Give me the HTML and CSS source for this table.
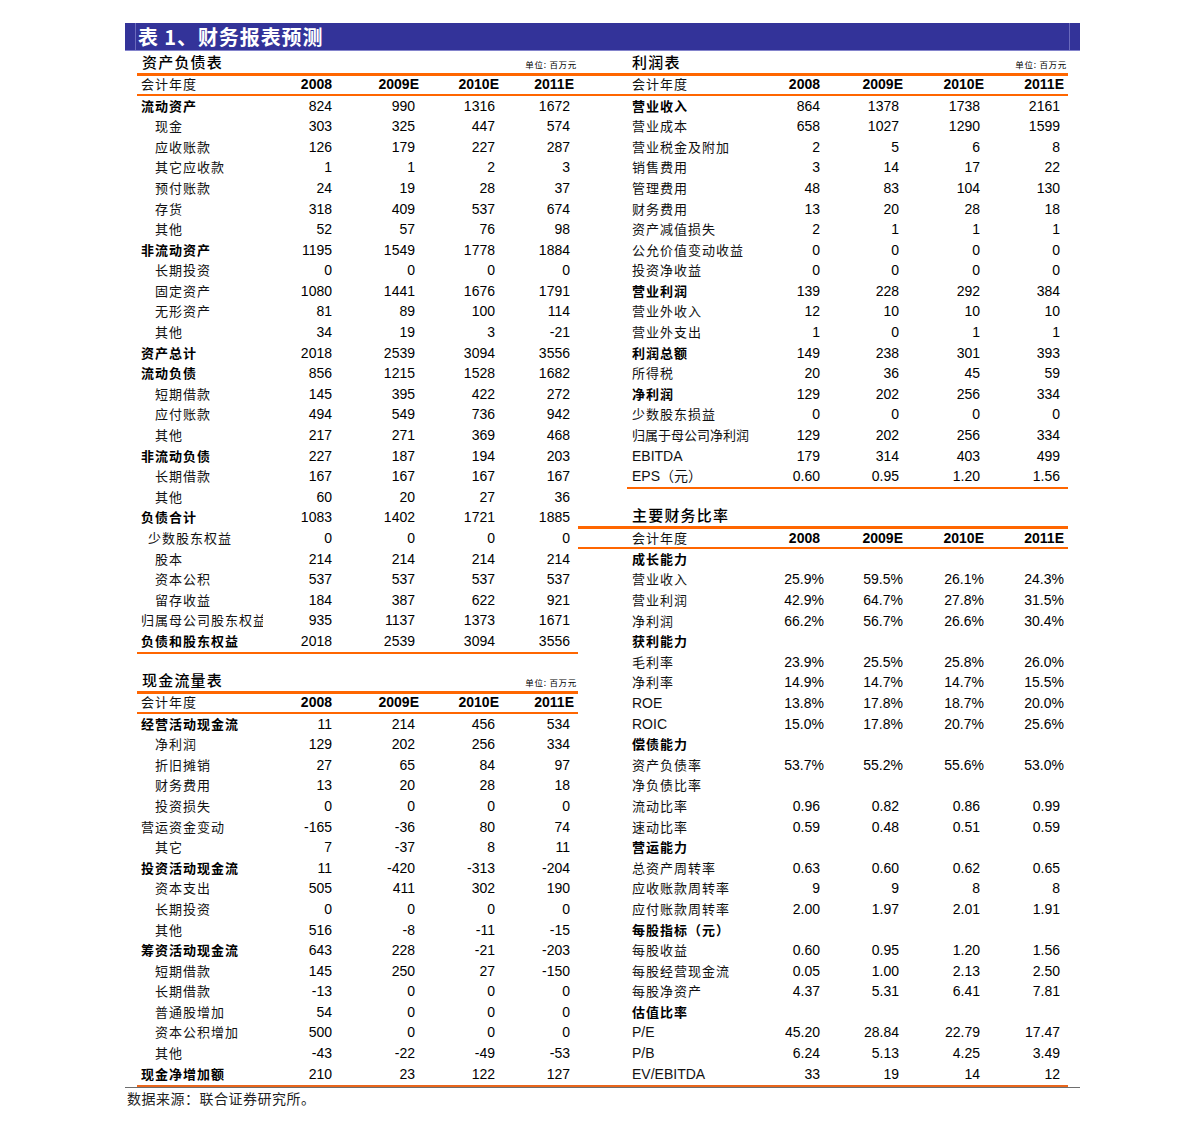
FILE: index.html
```html
<!DOCTYPE html>
<html lang="zh-CN">
<head>
<meta charset="utf-8">
<title>表 1、财务报表预测</title>
<link rel="stylesheet" href="styles.css">
</head>
<body>
<div class="page">
  <div class="titlebar"><div class="tb-in">表 1、财务报表预测</div></div>
  <div class="body">
    <div class="col left">
      <div class="sec"><span class="st">资产负债表</span><span class="unit">单位: 百万元</span></div>
      <div class="r hd"><span class="l">会计年度</span><span class="y0">2008</span><span>2009E</span><span>2010E</span><span>2011E</span></div>
      <div class="r b"><span class="l">流动资产</span><span>824</span><span>990</span><span>1316</span><span>1672</span></div>
      <div class="r"><span class="l i">现金</span><span>303</span><span>325</span><span>447</span><span>574</span></div>
      <div class="r"><span class="l i">应收账款</span><span>126</span><span>179</span><span>227</span><span>287</span></div>
      <div class="r"><span class="l i">其它应收款</span><span>1</span><span>1</span><span>2</span><span>3</span></div>
      <div class="r"><span class="l i">预付账款</span><span>24</span><span>19</span><span>28</span><span>37</span></div>
      <div class="r"><span class="l i">存货</span><span>318</span><span>409</span><span>537</span><span>674</span></div>
      <div class="r"><span class="l i">其他</span><span>52</span><span>57</span><span>76</span><span>98</span></div>
      <div class="r b"><span class="l">非流动资产</span><span>1195</span><span>1549</span><span>1778</span><span>1884</span></div>
      <div class="r"><span class="l i">长期投资</span><span>0</span><span>0</span><span>0</span><span>0</span></div>
      <div class="r"><span class="l i">固定资产</span><span>1080</span><span>1441</span><span>1676</span><span>1791</span></div>
      <div class="r"><span class="l i">无形资产</span><span>81</span><span>89</span><span>100</span><span>114</span></div>
      <div class="r"><span class="l i">其他</span><span>34</span><span>19</span><span>3</span><span>-21</span></div>
      <div class="r b"><span class="l">资产总计</span><span>2018</span><span>2539</span><span>3094</span><span>3556</span></div>
      <div class="r b"><span class="l">流动负债</span><span>856</span><span>1215</span><span>1528</span><span>1682</span></div>
      <div class="r"><span class="l i">短期借款</span><span>145</span><span>395</span><span>422</span><span>272</span></div>
      <div class="r"><span class="l i">应付账款</span><span>494</span><span>549</span><span>736</span><span>942</span></div>
      <div class="r"><span class="l i">其他</span><span>217</span><span>271</span><span>369</span><span>468</span></div>
      <div class="r b"><span class="l">非流动负债</span><span>227</span><span>187</span><span>194</span><span>203</span></div>
      <div class="r"><span class="l i">长期借款</span><span>167</span><span>167</span><span>167</span><span>167</span></div>
      <div class="r"><span class="l i">其他</span><span>60</span><span>20</span><span>27</span><span>36</span></div>
      <div class="r b"><span class="l">负债合计</span><span>1083</span><span>1402</span><span>1721</span><span>1885</span></div>
      <div class="r"><span class="l h">少数股东权益</span><span>0</span><span>0</span><span>0</span><span>0</span></div>
      <div class="r"><span class="l i">股本</span><span>214</span><span>214</span><span>214</span><span>214</span></div>
      <div class="r"><span class="l i">资本公积</span><span>537</span><span>537</span><span>537</span><span>537</span></div>
      <div class="r"><span class="l i">留存收益</span><span>184</span><span>387</span><span>622</span><span>921</span></div>
      <div class="r"><span class="l clip">归属母公司股东权益</span><span>935</span><span>1137</span><span>1373</span><span>1671</span></div>
      <div class="r b"><span class="l">负债和股东权益</span><span>2018</span><span>2539</span><span>3094</span><span>3556</span></div>
      <div class="endline"></div>

      <div class="sec gap"><span class="st">现金流量表</span><span class="unit">单位: 百万元</span></div>
      <div class="r hd"><span class="l">会计年度</span><span class="y0">2008</span><span>2009E</span><span>2010E</span><span>2011E</span></div>
      <div class="r b"><span class="l">经营活动现金流</span><span>11</span><span>214</span><span>456</span><span>534</span></div>
      <div class="r"><span class="l i">净利润</span><span>129</span><span>202</span><span>256</span><span>334</span></div>
      <div class="r"><span class="l i">折旧摊销</span><span>27</span><span>65</span><span>84</span><span>97</span></div>
      <div class="r"><span class="l i">财务费用</span><span>13</span><span>20</span><span>28</span><span>18</span></div>
      <div class="r"><span class="l i">投资损失</span><span>0</span><span>0</span><span>0</span><span>0</span></div>
      <div class="r"><span class="l">营运资金变动</span><span>-165</span><span>-36</span><span>80</span><span>74</span></div>
      <div class="r"><span class="l i">其它</span><span>7</span><span>-37</span><span>8</span><span>11</span></div>
      <div class="r b"><span class="l">投资活动现金流</span><span>11</span><span>-420</span><span>-313</span><span>-204</span></div>
      <div class="r"><span class="l i">资本支出</span><span>505</span><span>411</span><span>302</span><span>190</span></div>
      <div class="r"><span class="l i">长期投资</span><span>0</span><span>0</span><span>0</span><span>0</span></div>
      <div class="r"><span class="l i">其他</span><span>516</span><span>-8</span><span>-11</span><span>-15</span></div>
      <div class="r b"><span class="l">筹资活动现金流</span><span>643</span><span>228</span><span>-21</span><span>-203</span></div>
      <div class="r"><span class="l i">短期借款</span><span>145</span><span>250</span><span>27</span><span>-150</span></div>
      <div class="r"><span class="l i">长期借款</span><span>-13</span><span>0</span><span>0</span><span>0</span></div>
      <div class="r"><span class="l i">普通股增加</span><span>54</span><span>0</span><span>0</span><span>0</span></div>
      <div class="r"><span class="l i">资本公积增加</span><span>500</span><span>0</span><span>0</span><span>0</span></div>
      <div class="r"><span class="l i">其他</span><span>-43</span><span>-22</span><span>-49</span><span>-53</span></div>
      <div class="r b"><span class="l">现金净增加额</span><span>210</span><span>23</span><span>122</span><span>127</span></div>
      <div class="endline last"></div>
    </div>

    <div class="col right">
      <div class="sec"><span class="st">利润表</span><span class="unit">单位: 百万元</span></div>
      <div class="r hd"><span class="l">会计年度</span><span class="y0">2008</span><span>2009E</span><span>2010E</span><span>2011E</span></div>
      <div class="r b"><span class="l">营业收入</span><span>864</span><span>1378</span><span>1738</span><span>2161</span></div>
      <div class="r"><span class="l">营业成本</span><span>658</span><span>1027</span><span>1290</span><span>1599</span></div>
      <div class="r"><span class="l">营业税金及附加</span><span>2</span><span>5</span><span>6</span><span>8</span></div>
      <div class="r"><span class="l">销售费用</span><span>3</span><span>14</span><span>17</span><span>22</span></div>
      <div class="r"><span class="l">管理费用</span><span>48</span><span>83</span><span>104</span><span>130</span></div>
      <div class="r"><span class="l">财务费用</span><span>13</span><span>20</span><span>28</span><span>18</span></div>
      <div class="r"><span class="l">资产减值损失</span><span>2</span><span>1</span><span>1</span><span>1</span></div>
      <div class="r"><span class="l">公允价值变动收益</span><span>0</span><span>0</span><span>0</span><span>0</span></div>
      <div class="r"><span class="l">投资净收益</span><span>0</span><span>0</span><span>0</span><span>0</span></div>
      <div class="r b"><span class="l">营业利润</span><span>139</span><span>228</span><span>292</span><span>384</span></div>
      <div class="r"><span class="l">营业外收入</span><span>12</span><span>10</span><span>10</span><span>10</span></div>
      <div class="r"><span class="l">营业外支出</span><span>1</span><span>0</span><span>1</span><span>1</span></div>
      <div class="r b"><span class="l">利润总额</span><span>149</span><span>238</span><span>301</span><span>393</span></div>
      <div class="r"><span class="l">所得税</span><span>20</span><span>36</span><span>45</span><span>59</span></div>
      <div class="r b"><span class="l">净利润</span><span>129</span><span>202</span><span>256</span><span>334</span></div>
      <div class="r"><span class="l">少数股东损益</span><span>0</span><span>0</span><span>0</span><span>0</span></div>
      <div class="r"><span class="l tight">归属于母公司净利润</span><span>129</span><span>202</span><span>256</span><span>334</span></div>
      <div class="r"><span class="l lat">EBITDA</span><span>179</span><span>314</span><span>403</span><span>499</span></div>
      <div class="r"><span class="l lat">EPS（元）</span><span>0.60</span><span>0.95</span><span>1.20</span><span>1.56</span></div>
      <div class="endline inset"></div>

      <div class="sec gap"><span class="st">主要财务比率</span></div>
      <div class="r hd"><span class="l">会计年度</span><span class="y0">2008</span><span>2009E</span><span>2010E</span><span>2011E</span></div>
      <div class="r b"><span class="l">成长能力</span><span></span><span></span><span></span><span></span></div>
      <div class="r p"><span class="l">营业收入</span><span>25.9%</span><span>59.5%</span><span>26.1%</span><span>24.3%</span></div>
      <div class="r p"><span class="l">营业利润</span><span>42.9%</span><span>64.7%</span><span>27.8%</span><span>31.5%</span></div>
      <div class="r p"><span class="l">净利润</span><span>66.2%</span><span>56.7%</span><span>26.6%</span><span>30.4%</span></div>
      <div class="r b"><span class="l">获利能力</span><span></span><span></span><span></span><span></span></div>
      <div class="r p"><span class="l">毛利率</span><span>23.9%</span><span>25.5%</span><span>25.8%</span><span>26.0%</span></div>
      <div class="r p"><span class="l">净利率</span><span>14.9%</span><span>14.7%</span><span>14.7%</span><span>15.5%</span></div>
      <div class="r p"><span class="l lat">ROE</span><span>13.8%</span><span>17.8%</span><span>18.7%</span><span>20.0%</span></div>
      <div class="r p"><span class="l lat">ROIC</span><span>15.0%</span><span>17.8%</span><span>20.7%</span><span>25.6%</span></div>
      <div class="r b"><span class="l">偿债能力</span><span></span><span></span><span></span><span></span></div>
      <div class="r p"><span class="l">资产负债率</span><span>53.7%</span><span>55.2%</span><span>55.6%</span><span>53.0%</span></div>
      <div class="r"><span class="l">净负债比率</span><span></span><span></span><span></span><span></span></div>
      <div class="r"><span class="l">流动比率</span><span>0.96</span><span>0.82</span><span>0.86</span><span>0.99</span></div>
      <div class="r"><span class="l">速动比率</span><span>0.59</span><span>0.48</span><span>0.51</span><span>0.59</span></div>
      <div class="r b"><span class="l">营运能力</span><span></span><span></span><span></span><span></span></div>
      <div class="r"><span class="l">总资产周转率</span><span>0.63</span><span>0.60</span><span>0.62</span><span>0.65</span></div>
      <div class="r"><span class="l">应收账款周转率</span><span>9</span><span>9</span><span>8</span><span>8</span></div>
      <div class="r"><span class="l">应付账款周转率</span><span>2.00</span><span>1.97</span><span>2.01</span><span>1.91</span></div>
      <div class="r b"><span class="l">每股指标（元）</span><span></span><span></span><span></span><span></span></div>
      <div class="r"><span class="l">每股收益</span><span>0.60</span><span>0.95</span><span>1.20</span><span>1.56</span></div>
      <div class="r"><span class="l">每股经营现金流</span><span>0.05</span><span>1.00</span><span>2.13</span><span>2.50</span></div>
      <div class="r"><span class="l">每股净资产</span><span>4.37</span><span>5.31</span><span>6.41</span><span>7.81</span></div>
      <div class="r b"><span class="l">估值比率</span><span></span><span></span><span></span><span></span></div>
      <div class="r"><span class="l lat">P/E</span><span>45.20</span><span>28.84</span><span>22.79</span><span>17.47</span></div>
      <div class="r"><span class="l lat">P/B</span><span>6.24</span><span>5.13</span><span>4.25</span><span>3.49</span></div>
      <div class="r"><span class="l lat">EV/EBITDA</span><span>33</span><span>19</span><span>14</span><span>12</span></div>
      <div class="endline last"></div>
    </div>
  </div>
  <div class="src">数据来源：联合证券研究所。</div>
</div>
</body>
</html>
```

FILE: styles.css
```css
html, body {
  margin: 0;
  padding: 0;
  background: #ffffff;
}

.page {
  width: 955px;
  margin-left: 125px;
  padding-top: 23px;
  color: #000;
  font-family: "Liberation Sans", "Noto Sans CJK SC", sans-serif;
}

/* title bar */
.titlebar {
  height: 27px;
  background: #333399;
  border-bottom: 1px solid #8484cc;
  padding: 0 10px;
}
.tb-in {
  height: 27px;
  border-left: 1px solid #6a6abc;
  border-right: 1px solid #6a6abc;
  padding-left: 2px;
  display: flex;
  align-items: center;
  color: #ffffff;
  font-family: "Noto Sans CJK SC", sans-serif;
  font-weight: 700;
  font-size: 20px;
  line-height: 27px;
  letter-spacing: 0.9px;
}

/* two column body */
.body {
  display: grid;
  grid-template-columns: 441px 490px;
  padding: 0 12px;
  border-bottom: 1px solid #6e6e6e;
}

.col {
  display: flex;
  flex-direction: column;
}

/* section titles */
.sec {
  height: 22px;
  display: flex;
  justify-content: space-between;
  align-items: center;
  border-bottom: 3px solid #ff6600;
}
.sec.gap {
  padding-top: 15px;
}
.left .sec {
  padding-left: 5px;
}
.right .sec {
  padding-left: 54px;
}
.st {
  font-family: "Noto Sans CJK SC", sans-serif;
  font-size: 15px;
  font-weight: 500;
  letter-spacing: 1.2px;
  line-height: 20px;
}
.unit {
  font-family: "Noto Sans CJK SC", sans-serif;
  font-size: 8.5px;
  line-height: 12px;
  padding-top: 4px;
  padding-right: 1px;
  letter-spacing: 0.7px;
}

/* rows */
.r {
  display: grid;
  height: 19.1px;
  padding-bottom: 1.5px;
  align-items: center;
}
.left .r {
  grid-template-columns: 126px 73px 83px 80px 75px;
}
.right .r {
  grid-template-columns: 118px 79px 79px 81px 80px;
  padding-left: 49px;
}
.r span {
  text-align: right;
  padding-right: 4px;
  font-family: "Liberation Sans", "Noto Sans CJK SC", sans-serif;
  font-size: 14px;
  line-height: 16px;
  white-space: nowrap;
}
.r.p span {
  padding-right: 0;
}
.r .l {
  text-align: left;
  padding-right: 0;
  font-family: "Noto Sans CJK SC", sans-serif;
  font-size: 13px;
  line-height: 16px;
  letter-spacing: 1px;
  color: #111;
}
.left .r .l {
  padding-left: 4px;
}
.left .r .l.clip {
  overflow: hidden;
  line-height: 18px;
}
.right .r .l {
  padding-left: 5px;
}
.left .r .l.i {
  padding-left: 18px;
}
.left .r .l.h {
  padding-left: 11px;
}
.r .l.tight {
  letter-spacing: 0;
}
.r .l.lat {
  font-family: "Liberation Sans", "Noto Sans CJK SC", sans-serif;
  font-size: 14px;
  letter-spacing: 0;
}
.r.b .l {
  font-weight: 700;
  color: #000;
}

/* header row */
.r.hd {
  height: 16.5px;
  padding-bottom: 1.5px;
  border-bottom: 2px solid #ff6600;
}
.r.hd span {
  font-weight: 700;
  padding-right: 0;
}
.r.hd span.y0 {
  padding-right: 4px;
}
.r.hd .l {
  font-weight: 400;
}

/* closing rules */
.endline {
  height: 2px;
  background: #ff6600;
}
.endline.inset {
  margin-left: 49px;
}
.endline.last {
  background: #e9661c;
}

/* source note */
.src {
  padding-left: 2px;
  font-family: "Noto Sans CJK SC", sans-serif;
  font-size: 14px;
  line-height: 20px;
  letter-spacing: 0.5px;
  color: #222;
}
```
